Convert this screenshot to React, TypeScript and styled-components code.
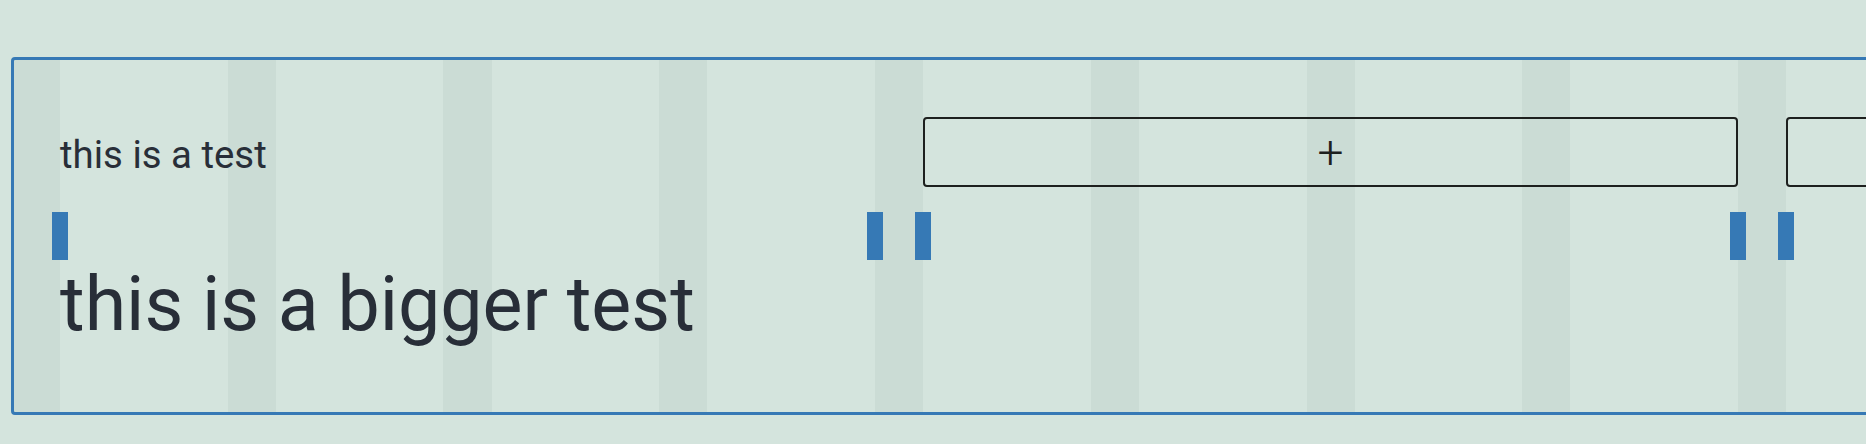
import * as React from "react"
import styled, { createGlobalStyle } from "styled-components"

const COL = 167.75
const GUTTER = 48

const GlobalStyle = createGlobalStyle`
    html, body {
        margin: 0;
        padding: 0;
        background: #d4e4dd;
        overflow: hidden;
    }
    #root {
        width: 1866px;
        height: 444px;
    }
`

const Page = styled.div`
    width: 1866px;
    height: 444px;
    padding-top: 57px;
    padding-left: 11px;
    box-sizing: border-box;
    background: #d4e4dd;
    font-family: Roboto, "Liberation Sans", sans-serif;
    color: #282e38;
`

const Frame = styled.div`
    width: 2700px;
    height: 358px;
    box-sizing: border-box;
    border: 3px solid #3679b5;
    border-radius: 4px;
    padding: 57px 0 0 46px;
    background-color: #d4e4dd;
    background-image: repeating-linear-gradient(
        to right,
        #cbdcd5 0px,
        #cbdcd5 ${GUTTER}px,
        transparent ${GUTTER}px,
        transparent ${COL + GUTTER}px
    );
    background-origin: border-box;
    background-position: 1px 0;
`

const Row = styled.div<{ $height?: number; $gapTop?: number }>`
    display: grid;
    grid-template-columns: repeat(12, ${COL}px);
    column-gap: ${GUTTER}px;
    height: ${(p) => (p.$height ? `${p.$height}px` : "auto")};
    margin-top: ${(p) => p.$gapTop ?? 0}px;
`

const Cell = styled.div<{ $from: number; $to: number }>`
    grid-column: ${(p) => p.$from} / ${(p) => p.$to};
    min-width: 0;
`

const SmallText = styled(Cell)`
    font-size: 38.4px;
    line-height: normal;
    padding-top: 15px;
    white-space: nowrap;
`

const BigText = styled(Cell)`
    font-size: 75.3px;
    line-height: normal;
    white-space: nowrap;
`

const AddBox = styled(Cell)`
    box-sizing: border-box;
    border: 2px solid #1d201e;
    border-radius: 4px;
    display: flex;
    align-items: center;
    justify-content: center;
    font-size: 46px;
    font-weight: 300;
    color: #1d201e;
    line-height: 1;
    cursor: pointer;
`

const HandleSpan = styled(Cell)`
    display: flex;
    justify-content: space-between;
    margin: 0 -8px;
`

const Handle = styled.span`
    width: 16px;
    height: 48px;
    background: #3679b5;
`

const items = [
    { from: 1, to: 5 },
    { from: 5, to: 9 },
    { from: 9, to: 13 },
]

export default function App() {
    return (
        <>
            <GlobalStyle />
            <Page>
                <Frame>
                    <Row $height={70}>
                        <SmallText $from={1} $to={5}>this is a test</SmallText>
                        <AddBox $from={5} $to={9}>+</AddBox>
                        <AddBox $from={9} $to={13}>+</AddBox>
                    </Row>
                    <Row $height={48} $gapTop={25}>
                        {items.map((it) => (
                            <HandleSpan key={it.from} $from={it.from} $to={it.to}>
                                <Handle />
                                <Handle />
                            </HandleSpan>
                        ))}
                    </Row>
                    <Row>
                        <BigText $from={1} $to={13}>this is a bigger test</BigText>
                    </Row>
                </Frame>
            </Page>
        </>
    )
}
